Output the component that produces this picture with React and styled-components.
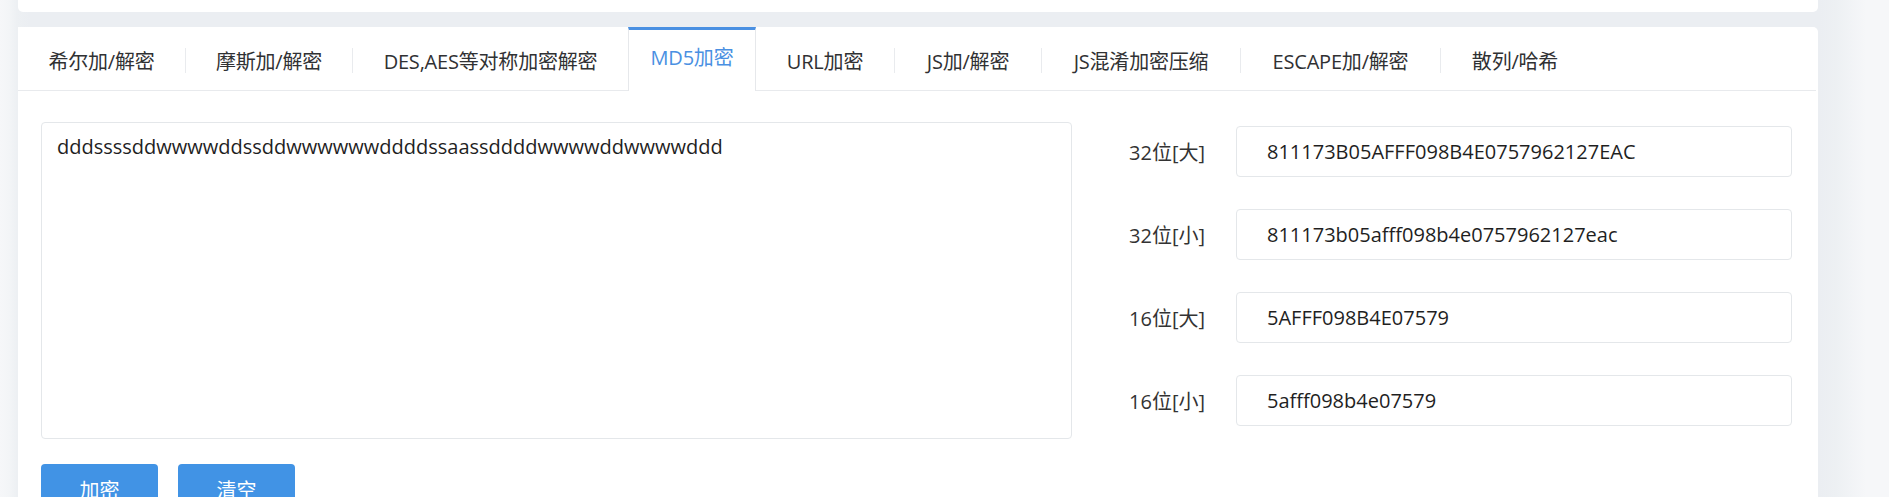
import React from "react";
import styled, { createGlobalStyle } from "styled-components";

const FONT = `"Open Sans", "Noto Sans CJK SC", sans-serif`;

const GlobalStyle = createGlobalStyle`
  html, body {
    margin: 0;
    padding: 0;
    background: #f6f7f9;
    font-family: ${FONT};
  }
  * {
    box-sizing: border-box;
  }
`;

const Page = styled.div`
  min-height: 100vh;
  padding: 0 71px 0 18px;
  background: linear-gradient(
    90deg,
    #f6f7f9 0px,
    #f3f5f7 9px,
    #edf0f3 17px,
    #ebeef2 30px,
    #ebeef2 1820px,
    #edf0f3 1836px,
    #f6f7f9 1866px
  );
`;

const TopCard = styled.div`
  height: 12px;
  background: #fff;
  border-radius: 0 0 5px 5px;
  margin-bottom: 15px;
`;

const Card = styled.div`
  background: #fff;
  border-radius: 5px;
  padding-bottom: 30px;
`;

const TabBar = styled.ul`
  display: flex;
  align-items: flex-start;
  height: 64px;
  margin: 0 2px 0 0;
  padding: 0;
  list-style: none;
  border-bottom: 1px solid #e8eaed;
`;

const Tab = styled.li`
  flex: none;
  display: flex;
  align-items: center;
  justify-content: center;
  width: ${(p) => p.$w}px;
  white-space: nowrap;
  font-size: 20px;
  line-height: 24px;
  letter-spacing: -0.2px;
  cursor: pointer;
  color: ${(p) => (p.$active ? "#4a90e2" : "#303133")};
  height: ${(p) => (p.$active ? "64px" : "63px")};
  padding: ${(p) => (p.$active ? "0 0 6px" : "7px 0 0")};
  background: #fff;
  ${(p) =>
    p.$active &&
    `
    border-top: 3px solid #4a90e2;
    border-left: 1px solid #e6e8eb;
    border-right: 1px solid #e6e8eb;
    margin-bottom: -1px;
  `}
`;

const Divider = styled.span`
  flex: none;
  width: 1px;
  height: 25px;
  margin-top: 21px;
  background: #e9ebee;
`;

const Body = styled.div`
  display: flex;
  padding: 31px 26px 0 23px;
`;

const Source = styled.textarea`
  flex: none;
  width: 1031px;
  height: 317px;
  padding: 9px 15px;
  border: 1px solid #e4e7ea;
  border-radius: 4px;
  resize: none;
  outline: none;
  font-family: ${FONT};
  font-size: 20px;
  line-height: 30px;
  color: #1f1f1f;
`;

const Results = styled.div`
  flex: 1;
  display: flex;
  flex-direction: column;
  gap: 32px;
  padding-top: 4px;
`;

const Row = styled.div`
  display: flex;
  align-items: center;
`;

const Label = styled.label`
  width: 133px;
  margin-right: 31px;
  text-align: right;
  font-size: 20px;
  color: #333;
  white-space: nowrap;
`;

const Output = styled.input`
  flex: 1;
  height: 51px;
  padding: 0 30px;
  border: 1px solid #e4e7ea;
  border-radius: 4px;
  outline: none;
  font-family: ${FONT};
  font-size: 20px;
  color: #1f1f1f;
  background: #fff;
`;

const Actions = styled.div`
  display: flex;
  gap: 20px;
  padding: 25px 0 0 23px;
`;

const Button = styled.button`
  height: 50px;
  padding: 0 38.5px;
  border: none;
  border-radius: 4px;
  background: #4193e5;
  color: #fff;
  font-family: ${FONT};
  font-size: 20px;
  cursor: pointer;
`;

const tabs = [
  { name: "希尔加/解密", w: 167 },
  { name: "摩斯加/解密", w: 166 },
  { name: "DES,AES等对称加密解密", w: 275 },
  { name: "MD5加密", w: 128 },
  { name: "URL加密", w: 138 },
  { name: "JS加/解密", w: 146 },
  { name: "JS混淆加密压缩", w: 198 },
  { name: "ESCAPE加/解密", w: 199 },
  { name: "散列/哈希", w: 148 },
];

const ACTIVE = 3;

const results = [
  { label: "32位[大]", value: "811173B05AFFF098B4E0757962127EAC" },
  { label: "32位[小]", value: "811173b05afff098b4e0757962127eac" },
  { label: "16位[大]", value: "5AFFF098B4E07579" },
  { label: "16位[小]", value: "5afff098b4e07579" },
];

export default function App() {
  const items = [];
  tabs.forEach((t, i) => {
    items.push(
      <Tab key={t.name} $w={t.w} $active={i === ACTIVE}>
        {t.name}
      </Tab>
    );
    const last = i === tabs.length - 1;
    if (!last && i !== ACTIVE && i + 1 !== ACTIVE) {
      items.push(<Divider key={t.name + "-sep"} />);
    }
  });

  return (
    <>
      <GlobalStyle />
      <Page>
        <TopCard />
        <Card>
          <TabBar>{items}</TabBar>
          <Body>
            <Source
              readOnly
              value="dddssssddwwwwddssddwwwwwwddddssaassddddwwwwddwwwwddd"
            />
            <Results>
              {results.map((r) => (
                <Row key={r.label}>
                  <Label>{r.label}</Label>
                  <Output readOnly value={r.value} />
                </Row>
              ))}
            </Results>
          </Body>
          <Actions>
            <Button>加密</Button>
            <Button>清空</Button>
          </Actions>
        </Card>
      </Page>
    </>
  );
}
